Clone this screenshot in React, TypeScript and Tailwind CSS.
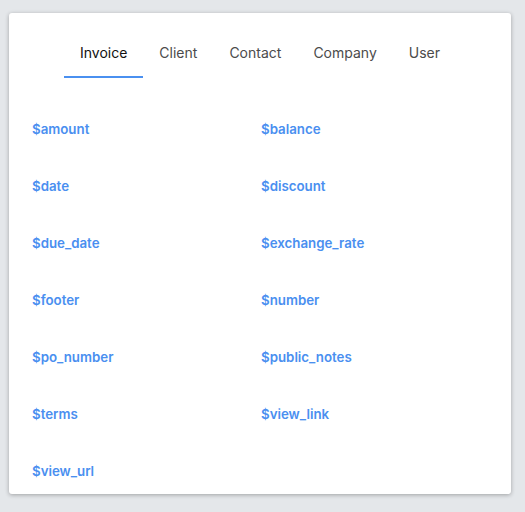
import React from "react";

const tabs = ["Invoice", "Client", "Contact", "Company", "User"];

const fields = [
    "$amount", "$balance",
    "$date", "$discount",
    "$due_date", "$exchange_rate",
    "$footer", "$number",
    "$po_number", "$public_notes",
    "$terms", "$view_link",
    "$view_url",
];

const App: React.FC = () => {
    return (
        <div className="min-h-[512px] bg-[#e4e7ea] pt-[13px] pl-[9px] pr-[14px] pb-[18px]" style={{ fontFamily: "Inter, 'Noto Sans', sans-serif" }}>
            <div className="bg-white rounded-[3px] shadow-[0_1px_4px_rgba(0,0,0,0.3)] w-[502px] h-[481px]">
                <nav className="flex justify-center pt-[29px]">
                    {tabs.map((t, i) => (
                        <div
                            key={t}
                            className={`px-4 pb-[12px] text-[14px] leading-[22px] border-b-2 ${i === 0 ? "border-[#4a90f0] text-[#111]" : "border-transparent text-[#4b4b4b]"}`}
                        >
                            {t}
                        </div>
                    ))}
                </nav>
                <div className="grid grid-cols-[229px_1fr] pl-[23px] pt-[40px]">
                    {fields.map((f) => (
                        <div key={f} className="h-[57px] text-[13.3px] leading-[22px] font-semibold text-[#4a8ff0]">
                            {f}
                        </div>
                    ))}
                </div>
            </div>
        </div>
    );
};

export default App;
